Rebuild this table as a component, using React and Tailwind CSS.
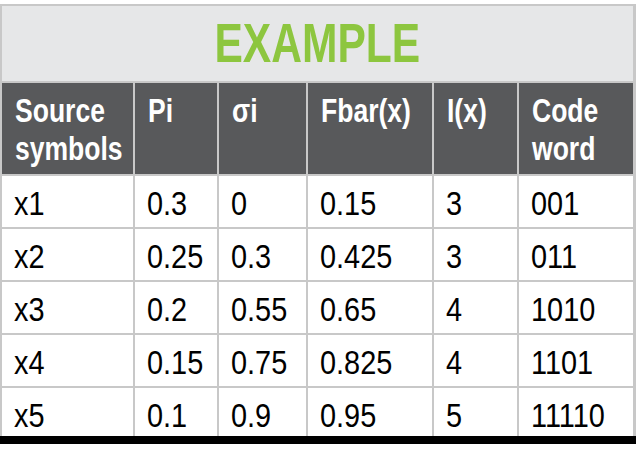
import React from "react";

const BODY = "font-['Liberation_Sans',Arial,sans-serif]";

const headers = [["Source", "symbols"], ["Pi"], ["σi"], ["Fbar(x)"], ["I(x)"], ["Code", "word"]];

const rows = [
  ["x1", "0.3", "0", "0.15", "3", "001"],
  ["x2", "0.25", "0.3", "0.425", "3", "011"],
  ["x3", "0.2", "0.55", "0.65", "4", "1010"],
  ["x4", "0.15", "0.75", "0.825", "4", "1101"],
  ["x5", "0.1", "0.9", "0.95", "5", "11110"],
];

export default function App() {
  return (
    <div className="w-[636px] h-[462px] bg-white pt-[4px]">
      <div className="bg-[#c8c8c8] pt-[2px] px-[2px]">
        <div className="grid grid-cols-[131px_82px_87px_124px_83px_114px] gap-[2px]">
          {/* title */}
          <div className="col-span-6 h-[75px] bg-[#e6e7e8] flex justify-center pt-[9px]">
            <span
              className={`${BODY} inline-block scale-x-[0.76] origin-center font-bold text-[56px] leading-[56px] text-[#8dc63f]`}
            >
              EXAMPLE
            </span>
          </div>

          {/* header */}
          {headers.map((h, i) => (
            <div key={i} className="h-[91px] bg-[#58595b] pl-[13px] pt-[8px]">
              {h.map((line) => (
                <div
                  key={line}
                  className={`${BODY} origin-left scale-x-[0.78] font-bold text-white text-[34px] leading-[38px] whitespace-nowrap`}
                >
                  {line}
                </div>
              ))}
            </div>
          ))}

          {/* data */}
          {rows.map((r, ri) =>
            r.map((c, ci) => (
              <div
                key={`${ri}-${ci}`}
                className={`${ri === 4 ? "h-[48px]" : "h-[51px]"} bg-white pl-[12px] pt-[10px]`}
              >
                <div className={`${BODY} origin-left scale-x-[0.85] text-[34px] leading-[34px] text-black whitespace-nowrap`}>
                  {c}
                </div>
              </div>
            ))
          )}
        </div>
      </div>
      <div className="h-[8px] bg-black" />
    </div>
  );
}
